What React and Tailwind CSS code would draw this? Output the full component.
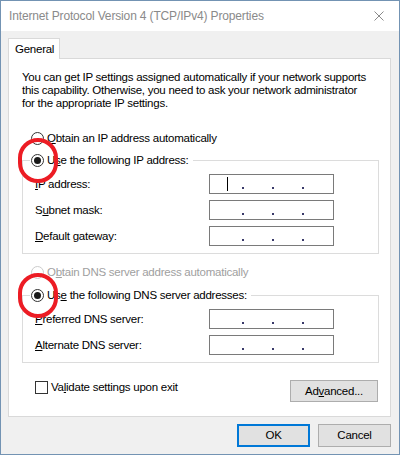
// Windows 10 "Internet Protocol Version 4 (TCP/IPv4) Properties" dialog

function Radio({ checked = false, disabled = false, ring = false }) {
  return (
    <span
      className={
        'relative flex items-center justify-center w-[13px] h-[13px] rounded-full border bg-white shrink-0 ' +
        (disabled ? 'border-[#cccccc]' : 'border-[#333333]')
      }
    >
      {checked && <span className="w-[7px] h-[7px] rounded-full bg-[#1a1a1a]" />}
      {/* red annotation ring drawn over the radio */}
      {ring && (
        <span className="absolute z-20 left-[-14px] top-[-17px] w-[40px] h-[45px] rounded-full border-[4px] border-[#ec1c24] pointer-events-none" />
      )}
    </span>
  );
}

function IpBox({ cursor = false }) {
  return (
    <div className="relative w-[125px] h-[20px] border border-[#7a7a7a] bg-white">
      {cursor && <span className="absolute left-[17px] top-[2px] w-[1px] h-[14px] bg-black" />}
      <div className="flex pl-[32px] pt-[12px] gap-[28px]">
        <span className="w-[2px] h-[2px] bg-[#3a3a6a]" />
        <span className="w-[2px] h-[2px] bg-[#3a3a6a]" />
        <span className="w-[2px] h-[2px] bg-[#3a3a6a]" />
      </div>
    </div>
  );
}

function FieldRow({ children, cursor }) {
  return (
    <div className="flex items-center h-[20px]">
      <span className="w-[174px] whitespace-nowrap">{children}</span>
      <IpBox cursor={cursor} />
    </div>
  );
}

function Button({ children, primary = false, className = '' }) {
  return (
    <button
      className={
        'flex items-center justify-center bg-[#e1e1e1] text-black ' +
        (primary ? 'border-2 border-[#0078d7] ' : 'border border-[#adadad] ') +
        className
      }
    >
      {children}
    </button>
  );
}

export default function App() {
  return (
    <div className="w-[400px] h-[455px] flex flex-col border border-[#7393b3] font-['Liberation_Sans',Arial,sans-serif] text-[11.5px] tracking-[-0.25px] leading-[13px] text-black bg-white">
      {/* title bar */}
      <div className="h-[30px] flex items-center justify-between bg-white pl-[8px] pr-[10px]">
        <span className="text-[12px] tracking-[-0.15px] text-[#8a8a8a] whitespace-nowrap">
          Internet Protocol Version 4 (TCP/IPv4) Properties
        </span>
        <svg width="10" height="10" viewBox="0 0 10 10" className="mr-[5px]">
          <path d="M0.5 0.5 L9.5 9.5 M9.5 0.5 L0.5 9.5" stroke="#8a8a8a" strokeWidth="1" />
        </svg>
      </div>

      {/* body */}
      <div className="flex-1 bg-[#f0f0f0] pl-[7px] pr-[8px] pt-[7px]">
        <div className="relative z-10 w-[52px] h-[21px] -mb-px bg-white border-x border-t border-[#d9d9d9] pl-[6px] pt-[3px] leading-[15px]">
          General
        </div>
        <div className="h-[359px] bg-white border border-[#d9d9d9] pl-[13px] pt-[12px]">
          <p className="whitespace-nowrap">
            You can get IP settings assigned automatically if your network supports
            <br />
            this capability. Otherwise, you need to ask your network administrator
            <br />
            for the appropriate IP settings.
          </p>

          <div className="flex items-center gap-[3px] h-[13px] mt-[22px] ml-[9px]">
            <Radio />
            <span>
              <u>O</u>btain an IP address automatically
            </span>
          </div>

          <div className="w-[357px] mt-[15px] border border-[#dcdcdc] pl-[12px] pb-[7px]">
            <div className="flex items-center gap-[3px] h-[13px] -mt-[7px] ml-[-5px] w-fit bg-white pl-[1px] pr-[4px]">
              <Radio checked ring />
              <span>
                U<u>s</u>e the following IP address:
              </span>
            </div>
            <div className="flex flex-col gap-[6px] mt-[7px]">
              <FieldRow cursor>
                <u>I</u>P address:
              </FieldRow>
              <FieldRow>
                S<u>u</u>bnet mask:
              </FieldRow>
              <FieldRow>
                <u>D</u>efault gateway:
              </FieldRow>
            </div>
          </div>

          <div className="flex items-center gap-[3px] h-[13px] mt-[12px] ml-[9px] text-[#a0a0a0]">
            <Radio disabled />
            <span>
              O<u>b</u>tain DNS server address automatically
            </span>
          </div>

          <div className="w-[357px] mt-[16px] border border-[#dcdcdc] pl-[12px] pb-[7px]">
            <div className="flex items-center gap-[3px] h-[13px] -mt-[7px] ml-[-5px] w-fit bg-white pl-[1px] pr-[4px]">
              <Radio checked ring />
              <span>
                Us<u>e</u> the following DNS server addresses:
              </span>
            </div>
            <div className="flex flex-col gap-[6px] mt-[7px]">
              <FieldRow>
                <u>P</u>referred DNS server:
              </FieldRow>
              <FieldRow>
                <u>A</u>lternate DNS server:
              </FieldRow>
            </div>
          </div>

          <div className="w-[356px] mt-[17px] flex justify-between items-start">
            <div className="flex items-center gap-[3px] mt-[1px] ml-[13px] h-[13px]">
              <span className="w-[13px] h-[13px] border border-[#333333] bg-white" />
              <span>
                Va<u>l</u>idate settings upon exit
              </span>
            </div>
            <Button className="w-[88px] h-[22px]">
              Ad<u>v</u>anced...
            </Button>
          </div>
        </div>

        <div className="flex justify-end gap-[8px] mt-[7px]">
          <Button primary className="w-[73px] h-[23px]">
            OK
          </Button>
          <Button className="w-[73px] h-[23px]">Cancel</Button>
        </div>
      </div>
    </div>
  );
}
